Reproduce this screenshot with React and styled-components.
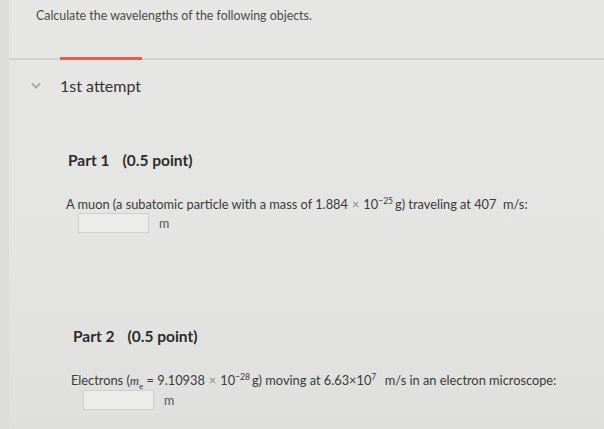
import React from "react";
import styled, { createGlobalStyle } from "styled-components";

const GlobalStyle = createGlobalStyle`
  html, body {
    margin: 0;
    padding: 0;
    background: #e5e5e3;
  }
  body {
    font-family: Lato, "Open Sans", "Liberation Sans", sans-serif;
  }
`;

const Page = styled.div`
  min-height: 100vh;
  padding-top: 8px;
  box-sizing: border-box;
  background: linear-gradient(180deg, #e6e6e4 0%, #e4e4e2 60%, #dfdfdd 100%);
  border-left: 9px solid #dcdcda;
`;

const Prompt = styled.p`
  margin: 0;
  padding-left: 27px;
  font-size: 12.4px;
  line-height: 16px;
  color: #4a4a4a;
`;

const TabBar = styled.div`
  height: 34px;
  display: flex;
  align-items: flex-end;
  border-bottom: 2px solid #d3d3d1;
`;

const TabIndicator = styled.div`
  margin-left: 51px;
  margin-bottom: -2px;
  width: 82px;
  height: 3px;
  background: #e0604b;
`;

const AttemptHeader = styled.div`
  height: 50px;
  display: flex;
  align-items: center;
  padding-left: 22px;
  font-size: 16px;
  color: #333;
`;

const Chevron = styled.svg`
  width: 10px;
  height: 7px;
  margin-right: 19px;
`;

const Part = styled.section`
  padding-left: ${(p) => p.$indent}px;
`;

const Heading = styled.h3`
  margin: ${(p) => p.$top}px 0 0 2px;
  font-size: 15.5px;
  line-height: 18px;
  font-weight: 700;
  color: #2b2b2b;
`;

const Points = styled.span`
  margin-left: 13px;
`;

const Question = styled.p`
  margin: 27px 0 0;
  font-size: 12.8px;
  line-height: 16px;
  color: #3a3a3a;
  white-space: nowrap;
`;

const Times = styled.span`
  color: #8a8a8a;
  margin: 0 4px;
`;

const Sup = styled.sup`
  font-size: 8.5px;
  line-height: 0;
  margin-right: 2px;
`;

const Sub = styled.sub`
  font-size: 8px;
  line-height: 0;
`;

const Var = styled.i`
  font-family: "Liberation Serif", serif;
`;

const AnswerRow = styled.div`
  display: flex;
  align-items: center;
  margin: 1px 0 0 12px;
`;

const AnswerBox = styled.input`
  width: 71px;
  height: 20px;
  box-sizing: border-box;
  border: 1px solid #cfcfcd;
  background: #ececea;
  margin: 0;
  padding: 0;
`;

const Unit = styled.span`
  margin-left: 10px;
  font-size: 12.5px;
  color: #555;
`;

const Answer = () => (
  <AnswerRow>
    <AnswerBox type="text" aria-label="answer" />
    <Unit>m</Unit>
  </AnswerRow>
);

export default function App() {
  return (
    <>
      <GlobalStyle />
      <Page>
        <Prompt>Calculate the wavelengths of the following objects.</Prompt>
        <TabBar>
          <TabIndicator />
        </TabBar>
        <AttemptHeader>
          <Chevron viewBox="0 0 10 7">
            <path d="M1 1.5 L5 5.5 L9 1.5" fill="none" stroke="#a9a9a7" strokeWidth="2" />
          </Chevron>
          1st attempt
        </AttemptHeader>

        <Part $indent={57}>
          <Heading $top={41}>
            Part 1<Points>(0.5 point)</Points>
          </Heading>
          <Question>
            A muon (a subatomic particle with a mass of 1.884<Times>×</Times>10
            <Sup>−25</Sup>g) traveling at 407&nbsp; m/s:
          </Question>
          <Answer />
        </Part>

        <Part $indent={62}>
          <Heading $top={94}>
            Part 2<Points>(0.5 point)</Points>
          </Heading>
          <Question>
            Electrons (<Var>m</Var>
            <Sub>e</Sub> = 9.10938<Times>×</Times>10<Sup>−28</Sup>g) moving at
            6.63×10<Sup>7</Sup>&nbsp; m/s in an electron microscope:
          </Question>
          <Answer />
        </Part>
      </Page>
    </>
  );
}
